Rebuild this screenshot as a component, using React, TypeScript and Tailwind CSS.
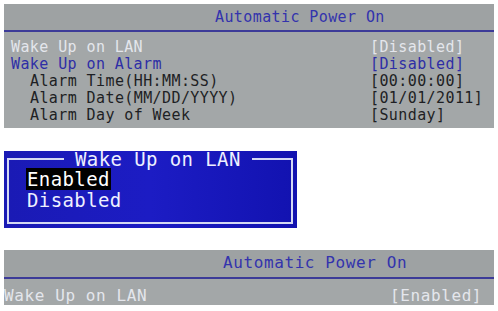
import React from "react";

const mono = { fontFamily: '"DejaVu Sans Mono", "Liberation Mono", monospace' };

const rows = [
  { label: "Wake Up on LAN", value: "[Disabled]", tone: "light", indent: false },
  { label: "Wake Up on Alarm", value: "[Disabled]", tone: "blue", indent: false },
  { label: "Alarm Time(HH:MM:SS)", value: "[00:00:00]", tone: "dark", indent: true },
  { label: "Alarm Date(MM/DD/YYYY)", value: "[01/01/2011]", tone: "dark", indent: true },
  { label: "Alarm Day of Week", value: "[Sunday]", tone: "dark", indent: true },
];

const toneClass: Record<string, string> = {
  light: "text-[#e4e6ec]",
  blue: "text-[#2e2ea6]",
  dark: "text-[#1e1f24]",
};

const App: React.FC = () => {
  return (
    <div className="w-[498px] h-[311px] bg-white overflow-hidden pt-[4px]" style={mono}>
      {/* Before */}
      <div className="mx-[4px] bg-[#a3a7a8]">
        <div className="h-[26px] bg-[#9ea2a3] pl-[211px] pt-[5px] text-[15px] leading-[17px] tracking-[0.4px] text-[#3333ad]">
          Automatic Power On
        </div>
        <div className="h-[2px] bg-[#3c3b98]" />
        <div className="pl-[7px] pt-[7px] pb-[4px] text-[15px] leading-[17px] tracking-[0.4px]">
          {rows.map((r) => (
            <div key={r.label} className={`flex ${toneClass[r.tone]}`}>
              <div className={`w-[359px] ${r.indent ? "pl-[19px]" : ""}`}>{r.label}</div>
              <div>{r.value}</div>
            </div>
          ))}
        </div>
      </div>

      {/* Popup */}
      <div className="mt-[23px] ml-[4px] w-[293px] h-[77px] bg-gradient-to-r from-[#1a1ab4] via-[#1c1cc4] to-[#1212b0] pl-[3px] pr-[4px] text-[19px] tracking-[0.4px] text-[#eef0ff]">
        <fieldset className="border-2 border-[#d4d8f4] h-[73px] pl-[17px]">
          <legend className="ml-[38px] px-[11px] leading-[16px]">Wake Up on LAN</legend>
          <div className="pt-[2px] leading-[21px]">
            <div>
              <span className="bg-black px-[1px] text-white">Enabled</span>
            </div>
            <div className="pl-[1px]">Disabled</div>
          </div>
        </fieldset>
      </div>

      {/* After */}
      <div className="mt-[22px] mx-[4px] h-[55px] bg-[#a3a7a8] overflow-hidden">
        <div className="h-[27px] bg-[#9ea2a3] pl-[219px] pt-[4px] text-[16px] leading-[17px] tracking-[0.6px] text-[#3333ad]">
          Automatic Power On
        </div>
        <div className="h-[2px] bg-[#3c3b98]" />
        <div className="flex pt-[8px] text-[16px] leading-[17px] tracking-[0.6px] text-[#e4e6ec]">
          <div className="w-[386px]">Wake Up on LAN</div>
          <div>[Enabled]</div>
        </div>
      </div>
    </div>
  );
};

export default App;
